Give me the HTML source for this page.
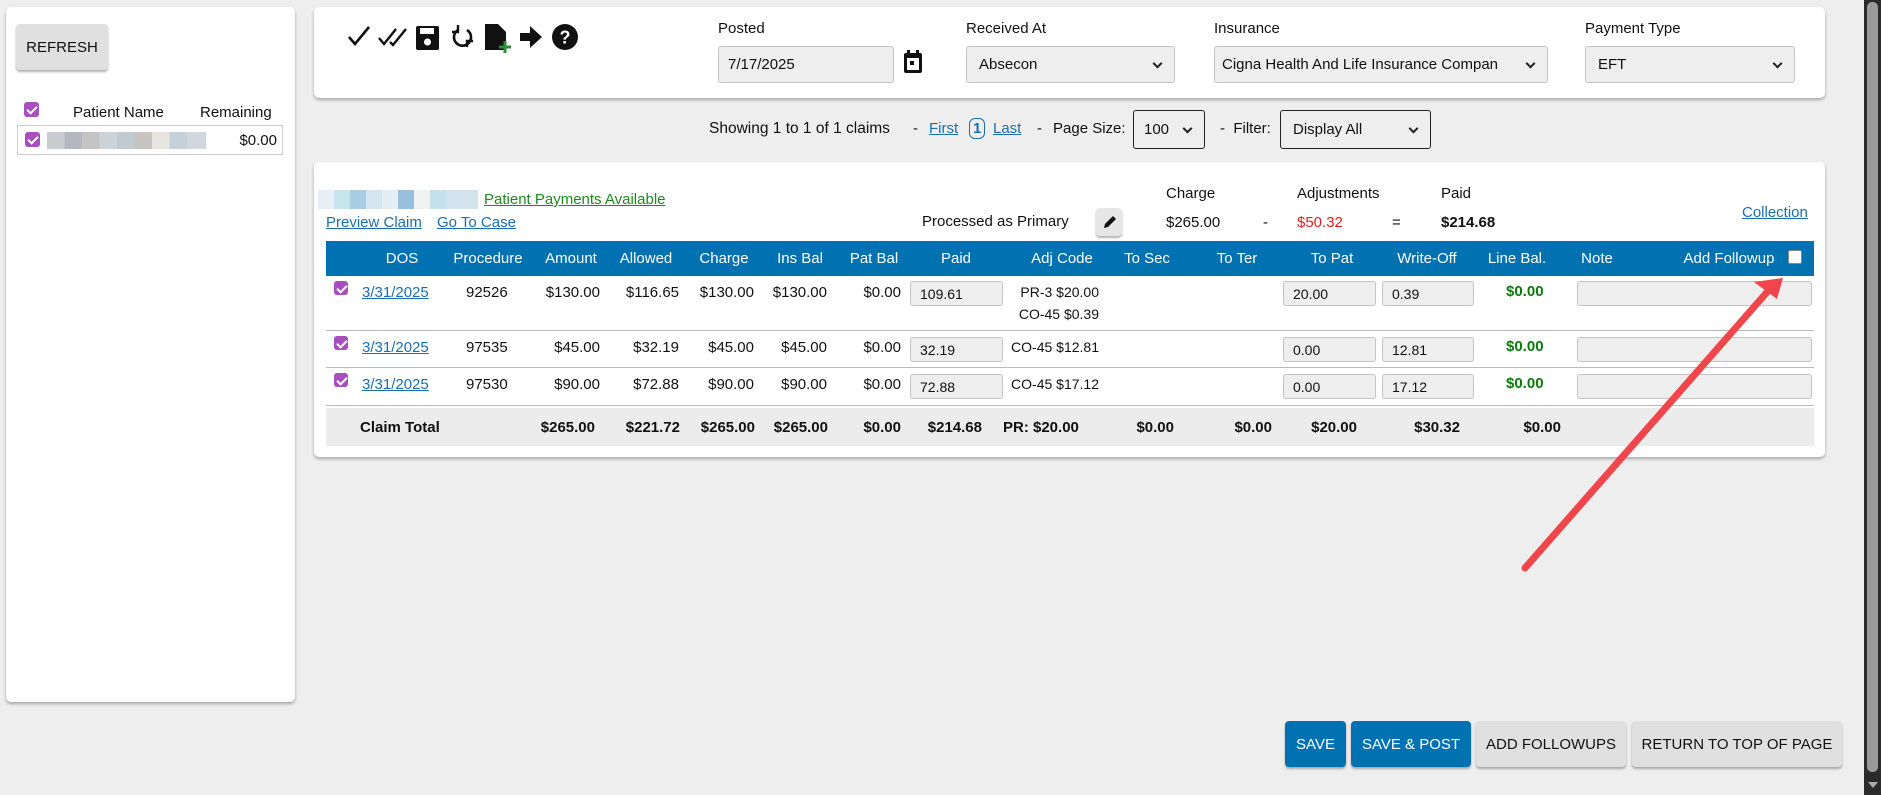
<!DOCTYPE html>
<html><head><meta charset="utf-8"><style>
*{box-sizing:border-box;margin:0;padding:0}
body{width:1881px;height:795px;background:#eeeeee;font-family:"Liberation Sans",sans-serif;font-size:15px;color:#111;position:relative;overflow:hidden}
.a{position:absolute;white-space:nowrap}
.panel{position:absolute;background:#fff;border-radius:5px;box-shadow:0 2px 3px rgba(0,0,0,.3)}
.inp{position:absolute;background:#eeeeee;border:1px solid #c4c4c4;border-radius:3px;font-size:14px;padding-left:9px;display:flex;align-items:center}
.sel{position:absolute;background:#eeeeee;border:1px solid #c4c4c4;border-radius:3px;font-size:15px;padding-left:12px;display:flex;align-items:center;white-space:nowrap}
.sel:after{content:"";position:absolute;right:13px;top:50%;width:5px;height:5px;border-right:2px solid #222;border-bottom:2px solid #222;transform:translateY(-70%) rotate(45deg)}
a,.lk{color:#1a6fb0;text-decoration:underline}
.cb{position:absolute;width:15px;height:15px;background:#a84fc0;border-radius:3px}
.cb:after{content:"";position:absolute;left:5px;top:2px;width:4px;height:8px;border-right:2px solid #fff;border-bottom:2px solid #fff;transform:rotate(45deg)}
.th{position:absolute;top:0;height:35px;line-height:35px;color:#fff;font-size:15px;transform:translateX(-50%);white-space:nowrap}
.r{position:absolute;text-align:right;transform:translateX(-100%);white-space:nowrap}
.b{font-weight:bold}
.g{color:#0a7a0a;font-weight:bold}
.btn{position:absolute;border-radius:4px;display:flex;align-items:center;justify-content:center;font-size:15px;box-shadow:0 2px 2px rgba(0,0,0,.3);white-space:nowrap}
</style></head><body>

<!-- left panel -->
<div class="panel" style="left:6px;top:7px;width:289px;height:695px">
  <div class="btn" style="left:10px;top:17px;width:92px;height:46px;background:#e0e0e0;color:#111">REFRESH</div>
  <div class="cb" style="left:18px;top:95px"></div>
  <div class="a" style="left:67px;top:97px">Patient Name</div>
  <div class="a" style="left:194px;top:97px">Remaining</div>
  <div style="position:absolute;left:11px;top:118px;width:266px;height:30px;border:1px solid #ccc"></div>
  <div class="cb" style="left:19px;top:125px"></div>
  <div style="position:absolute;left:41px;top:125px;width:159px;height:17px;background:linear-gradient(90deg,#c8ccd0 0 11%,#b4b6c0 11% 22%,#c4c4c4 22% 33%,#ccd4da 33% 44%,#c0cad0 44% 55%,#c8c4c0 55% 66%,#e8e4e0 66% 77%,#c4d0da 77% 88%,#d0d8de 88%)"></div>
  <div class="r" style="left:271px;top:125px">$0.00</div>
</div>

<!-- top panel -->
<div class="panel" style="left:314px;top:7px;width:1511px;height:91px">
  <svg class="a" style="left:34px;top:12px" width="236" height="34" viewBox="0 0 236 34">
    <path d="M1 18l6 7L21 8" fill="none" stroke="#111" stroke-width="2.6"/>
    <path d="M31 19l5 6 12-15M42 23l3 3 13-16" fill="none" stroke="#111" stroke-width="2.4"/>
    <rect x="68" y="7" width="23" height="24" rx="2" fill="#111"/><rect x="72" y="9" width="14" height="6" fill="#fff"/><circle cx="79.5" cy="23" r="3.5" fill="#fff"/>
    <path d="M110 11a8.5 8.5 0 1 0 9 0" fill="none" stroke="#111" stroke-width="2.6"/><path d="M110 6v7h-6" fill="none" stroke="#111" stroke-width="2.4"/><path d="M119 28v-6h6" fill="none" stroke="#111" stroke-width="2.4"/>
    <path d="M137 5h13l8 8v18h-21z" fill="#111"/><path d="M157 22v12M151 28h12" stroke="#2e8b3a" stroke-width="3"/>
    <path d="M172 14h10v-7l12 11-12 11v-7h-10z" fill="#111"/>
    <circle cx="217" cy="18" r="13" fill="#111"/><text x="217" y="24.5" text-anchor="middle" fill="#fff" font-size="18" font-weight="bold" font-family="Liberation Sans">?</text>
  </svg>
  <div class="a" style="left:404px;top:13px">Posted</div>
  <div class="inp" style="left:404px;top:39px;width:176px;height:37px;font-size:15px">7/17/2025</div>
  <svg class="a" style="left:588px;top:42px" width="22" height="26" viewBox="0 0 22 26"><rect x="2" y="4" width="18" height="20" rx="2" fill="#111"/><rect x="5" y="9" width="12" height="12" fill="#fff"/><rect x="8" y="12" width="4" height="4" fill="#111"/><rect x="5" y="1" width="3" height="5" fill="#111"/><rect x="14" y="1" width="3" height="5" fill="#111"/></svg>
  <div class="a" style="left:652px;top:13px">Received At</div>
  <div class="sel" style="left:652px;top:39px;width:209px;height:37px">Absecon</div>
  <div class="a" style="left:900px;top:13px">Insurance</div>
  <div class="sel" style="left:900px;top:39px;width:334px;height:37px;padding-left:7px;overflow:hidden">Cigna Health And Life Insurance Compan</div>
  <div class="a" style="left:1271px;top:13px">Payment Type</div>
  <div class="sel" style="left:1271px;top:39px;width:210px;height:37px">EFT</div>
</div>

<!-- pagination -->
<div class="a" style="left:709px;top:120px;font-size:15.5px">Showing 1 to 1 of 1 claims</div>
<div class="a" style="left:913px;top:120px">-</div>
<div class="a lk" style="left:929px;top:120px">First</div>
<div class="a" style="left:969px;top:118px;border:1px solid #1a6fb0;border-radius:6px;padding:0 3px;color:#1a6fb0;font-weight:bold;line-height:19px">1</div>
<div class="a lk" style="left:993px;top:120px">Last</div>
<div class="a" style="left:1037px;top:120px">-</div>
<div class="a" style="left:1053px;top:120px">Page Size:</div>
<div class="sel" style="left:1133px;top:110px;width:72px;height:39px;border:1px solid #222;background:#eee;padding-left:10px">100</div>
<div class="a" style="left:1220px;top:120px">- &nbsp;Filter:</div>
<div class="sel" style="left:1280px;top:110px;width:151px;height:39px;border:1px solid #222;padding-left:12px">Display All</div>

<!-- claims panel -->
<div class="panel" style="left:314px;top:162px;width:1511px;height:295px">
  <div style="position:absolute;left:4px;top:28px;width:160px;height:19px;background:linear-gradient(90deg,#e8eef6 0 10%,#c6e4ee 10% 20%,#a8cce2 20% 30%,#d6e6f0 30% 40%,#e4eef6 40% 50%,#98c0dc 50% 60%,#eef2f0 60% 70%,#c4e0ea 70% 80%,#d4e4ee 80%)"></div>
  <div class="a" style="left:170px;top:29px;color:#1e8a1e;text-decoration:underline">Patient Payments Available</div>
  <div class="a lk" style="left:12px;top:52px">Preview Claim</div>
  <div class="a lk" style="left:123px;top:52px">Go To Case</div>
  <div class="a" style="left:608px;top:51px">Processed as Primary</div>
  <div style="position:absolute;left:782px;top:46px;width:26px;height:28px;background:#e6e6e6;border-radius:4px;box-shadow:0 2px 2px rgba(0,0,0,.3)"><svg width="26" height="28" viewBox="0 0 26 28"><path d="M8 20l1-4 8-8 3 3-8 8z" fill="#111"/></svg></div>
  <div class="a" style="left:852px;top:23px">Charge</div>
  <div class="a" style="left:852px;top:52px">$265.00</div>
  <div class="a" style="left:949px;top:52px">-</div>
  <div class="a" style="left:983px;top:23px">Adjustments</div>
  <div class="a" style="left:983px;top:52px;color:#e02020">$50.32</div>
  <div class="a" style="left:1078px;top:52px">=</div>
  <div class="a" style="left:1127px;top:23px">Paid</div>
  <div class="a b" style="left:1127px;top:52px">$214.68</div>
  <div class="a lk" style="left:1428px;top:42px">Collection</div>

  <!-- table -->
  <div style="position:absolute;left:12px;top:79px;width:1488px;height:204px">
    <div style="position:absolute;left:0;top:0;width:1488px;height:35px;background:#0072b1">
      <div class="th" style="left:76px">DOS</div>
      <div class="th" style="left:162px">Procedure</div>
      <div class="th" style="left:245px">Amount</div>
      <div class="th" style="left:320px">Allowed</div>
      <div class="th" style="left:398px">Charge</div>
      <div class="th" style="left:474px">Ins Bal</div>
      <div class="th" style="left:548px">Pat Bal</div>
      <div class="th" style="left:630px">Paid</div>
      <div class="th" style="left:736px">Adj Code</div>
      <div class="th" style="left:821px">To Sec</div>
      <div class="th" style="left:911px">To Ter</div>
      <div class="th" style="left:1006px">To Pat</div>
      <div class="th" style="left:1101px">Write-Off</div>
      <div class="th" style="left:1191px">Line Bal.</div>
      <div class="th" style="left:1271px">Note</div>
      <div class="th" style="left:1403px">Add Followup</div>
      <div style="position:absolute;left:1462px;top:9px;width:14px;height:14px;background:#fff;border-radius:2px;border:1px solid #888"></div>
    </div>
    <!-- rows -->
    <div style="position:absolute;left:0;top:35px;width:1488px;height:55px;border-bottom:1px solid #bbb">
      <div class="cb" style="left:8px;top:5px;width:14px;height:14px"></div>
      <div class="a lk" style="left:36px;top:8px">3/31/2025</div>
      <div class="a" style="left:140px;top:8px">92526</div>
      <div class="r" style="left:274px;top:8px">$130.00</div>
      <div class="r" style="left:353px;top:8px">$116.65</div>
      <div class="r" style="left:428px;top:8px">$130.00</div>
      <div class="r" style="left:501px;top:8px">$130.00</div>
      <div class="r" style="left:575px;top:8px">$0.00</div>
      <div class="inp" style="left:584px;top:5px;width:93px;height:25px">109.61</div>
      <div class="r" style="left:773px;top:8px;font-size:14px">PR-3 $20.00</div>
      <div class="r" style="left:773px;top:30px;font-size:14px">CO-45 $0.39</div>
      <div class="inp" style="left:957px;top:5px;width:93px;height:25px">20.00</div>
      <div class="inp" style="left:1056px;top:5px;width:92px;height:25px">0.39</div>
      <div class="a g" style="left:1180px;top:7px">$0.00</div>
      <div class="inp" style="left:1251px;top:5px;width:235px;height:25px"></div>
    </div>
    <div style="position:absolute;left:0;top:90px;width:1488px;height:37px;border-bottom:1px solid #bbb">
      <div class="cb" style="left:8px;top:5px;width:14px;height:14px"></div>
      <div class="a lk" style="left:36px;top:8px">3/31/2025</div>
      <div class="a" style="left:140px;top:8px">97535</div>
      <div class="r" style="left:274px;top:8px">$45.00</div>
      <div class="r" style="left:353px;top:8px">$32.19</div>
      <div class="r" style="left:428px;top:8px">$45.00</div>
      <div class="r" style="left:501px;top:8px">$45.00</div>
      <div class="r" style="left:575px;top:8px">$0.00</div>
      <div class="inp" style="left:584px;top:6px;width:93px;height:25px">32.19</div>
      <div class="r" style="left:773px;top:8px;font-size:14px">CO-45 $12.81</div>
      <div class="inp" style="left:957px;top:6px;width:93px;height:25px">0.00</div>
      <div class="inp" style="left:1056px;top:6px;width:92px;height:25px">12.81</div>
      <div class="a g" style="left:1180px;top:7px">$0.00</div>
      <div class="inp" style="left:1251px;top:6px;width:235px;height:25px"></div>
    </div>
    <div style="position:absolute;left:0;top:127px;width:1488px;height:38px;border-bottom:1px solid #bbb">
      <div class="cb" style="left:8px;top:5px;width:14px;height:14px"></div>
      <div class="a lk" style="left:36px;top:8px">3/31/2025</div>
      <div class="a" style="left:140px;top:8px">97530</div>
      <div class="r" style="left:274px;top:8px">$90.00</div>
      <div class="r" style="left:353px;top:8px">$72.88</div>
      <div class="r" style="left:428px;top:8px">$90.00</div>
      <div class="r" style="left:501px;top:8px">$90.00</div>
      <div class="r" style="left:575px;top:8px">$0.00</div>
      <div class="inp" style="left:584px;top:6px;width:93px;height:25px">72.88</div>
      <div class="r" style="left:773px;top:8px;font-size:14px">CO-45 $17.12</div>
      <div class="inp" style="left:957px;top:6px;width:93px;height:25px">0.00</div>
      <div class="inp" style="left:1056px;top:6px;width:92px;height:25px">17.12</div>
      <div class="a g" style="left:1180px;top:7px">$0.00</div>
      <div class="inp" style="left:1251px;top:6px;width:235px;height:25px"></div>
    </div>
    <div style="position:absolute;left:0;top:167px;width:1488px;height:38px;background:#ececec" class="b">
      <div class="a" style="left:34px;top:11px">Claim Total</div>
      <div class="r" style="left:269px;top:11px">$265.00</div>
      <div class="r" style="left:354px;top:11px">$221.72</div>
      <div class="r" style="left:429px;top:11px">$265.00</div>
      <div class="r" style="left:502px;top:11px">$265.00</div>
      <div class="r" style="left:575px;top:11px">$0.00</div>
      <div class="r" style="left:656px;top:11px">$214.68</div>
      <div class="a" style="left:677px;top:11px">PR: $20.00</div>
      <div class="r" style="left:848px;top:11px">$0.00</div>
      <div class="r" style="left:946px;top:11px">$0.00</div>
      <div class="r" style="left:1031px;top:11px">$20.00</div>
      <div class="r" style="left:1134px;top:11px">$30.32</div>
      <div class="r" style="left:1235px;top:11px">$0.00</div>
    </div>
  </div>
</div>

<!-- bottom buttons -->
<div class="btn" style="left:1285px;top:721px;width:61px;height:46px;background:#0072b1;color:#fff">SAVE</div>
<div class="btn" style="left:1351px;top:721px;width:120px;height:46px;background:#0072b1;color:#fff">SAVE &amp; POST</div>
<div class="btn" style="left:1476px;top:721px;width:150px;height:46px;background:#e0e0e0">ADD FOLLOWUPS</div>
<div class="btn" style="left:1632px;top:721px;width:210px;height:46px;background:#e0e0e0">RETURN TO TOP OF PAGE</div>

<!-- scrollbar -->
<div style="position:absolute;left:1864px;top:0;width:17px;height:795px;background:#2b2b2b">
  <div style="position:absolute;left:3px;top:2px;width:11px;height:770px;background:#9a9a9a;border-radius:5px"></div>
  <div style="position:absolute;left:4px;top:782px;width:0;height:0;border-left:5px solid transparent;border-right:5px solid transparent;border-top:6px solid #aaa"></div>
</div>

<!-- arrow -->
<svg style="position:absolute;left:0;top:0" width="1881" height="795">
  <line x1="1525" y1="568" x2="1768" y2="291" stroke="#f0454b" stroke-width="7" stroke-linecap="round"/>
  <polygon points="1783,278 1754,282 1777,299" fill="#f0454b"/>
</svg>
</body></html>
